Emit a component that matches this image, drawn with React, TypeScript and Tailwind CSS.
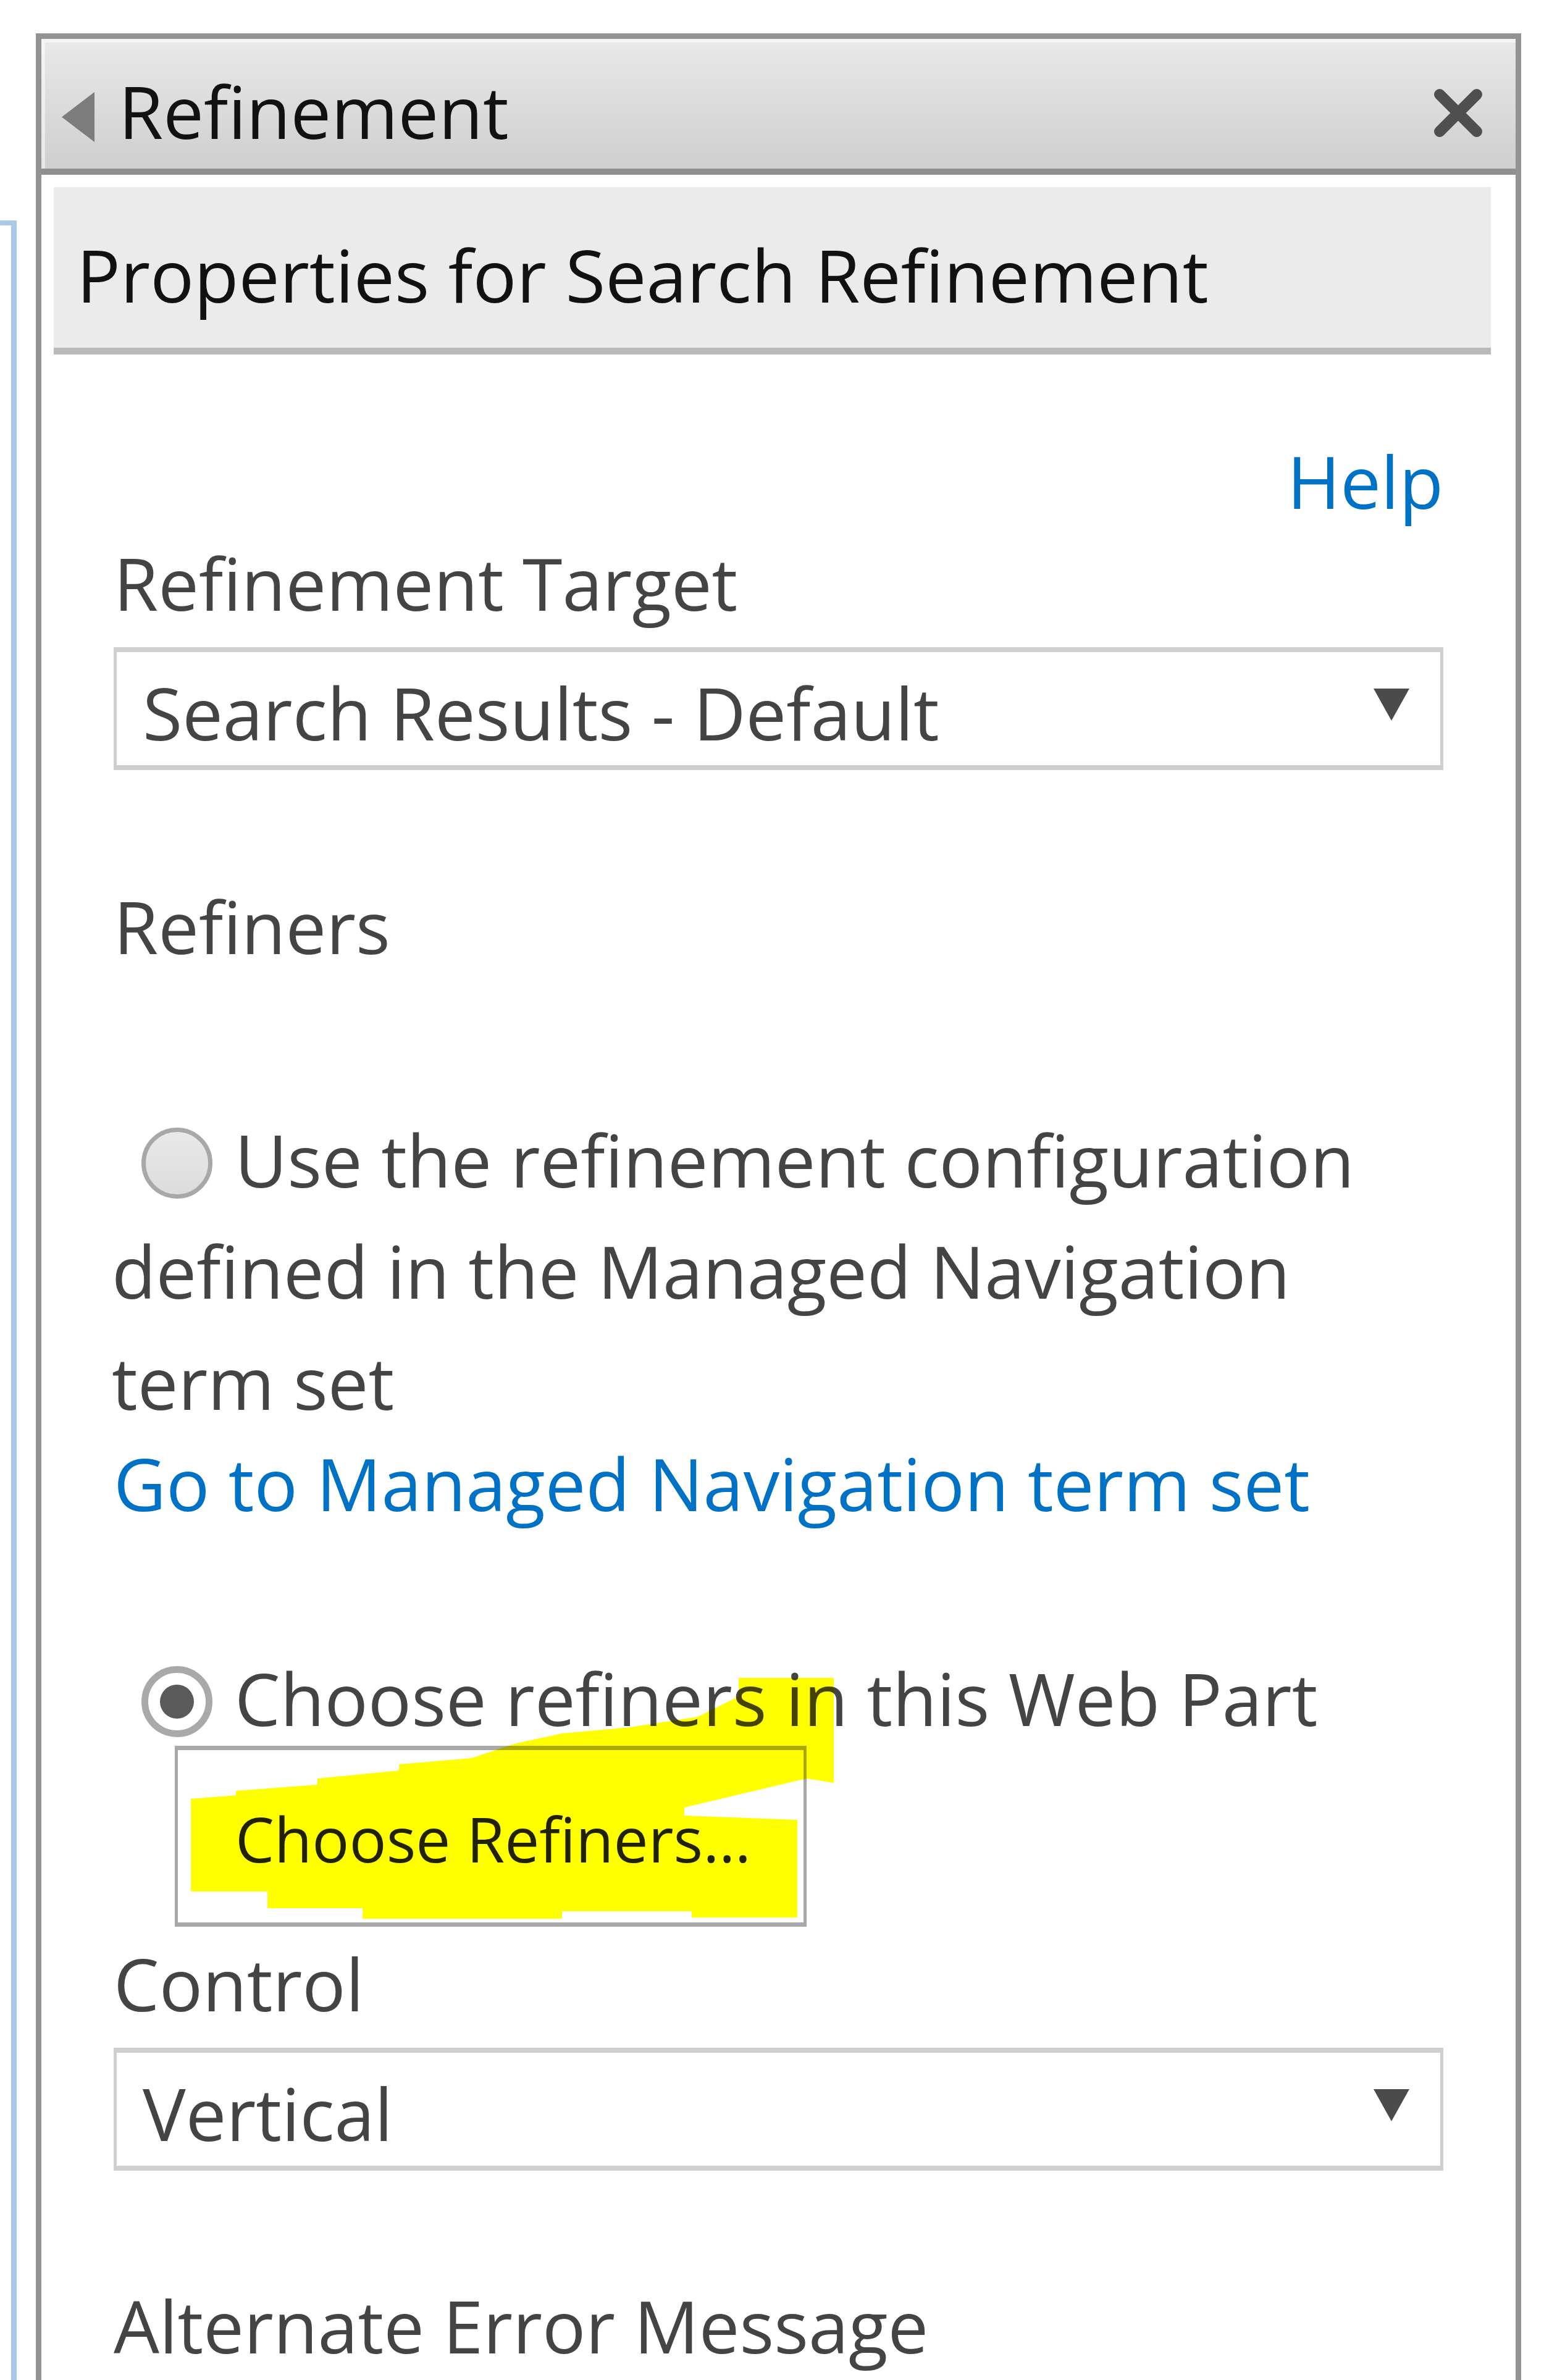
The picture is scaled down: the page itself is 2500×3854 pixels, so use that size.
import React from "react";

function Radio({ checked }: { checked?: boolean }) {
  if (checked) {
    return (
      <span className="inline-block align-[-18px] ml-[48px] mr-[36px] w-[115px] h-[115px] rounded-full border-[11px] border-[#a9a9a9] bg-white p-[19px]">
        <span className="block w-full h-full rounded-full bg-[#5a5a5a]" />
      </span>
    );
  }
  return (
    <span className="inline-block align-[-18px] ml-[48px] mr-[36px] w-[115px] h-[115px] rounded-full border-[7px] border-[#a8a8a8] bg-linear-to-b from-[#e9e9e9] to-[#dcdcdc]" />
  );
}

function Select({ value }: { value: string }) {
  return (
    <div className="flex h-[199px] border-y-[8px] border-x-[5px] border-[#cfcfcf] pl-[42px] pr-[50px] pt-[12px]">
      <span className="flex-1 self-center text-[117px] leading-[120px] text-[#444]">{value}</span>
      <svg width="58" height="52" viewBox="0 0 58 52" className="mt-[47px] shrink-0">
        <path d="M0 0H58L29 52Z" fill="#4b4b4b" />
      </svg>
    </div>
  );
}

export default function App() {
  return (
    <div className="relative flex w-[2500px] h-[3854px] overflow-hidden bg-white pt-[54px] font-['Open_Sans',sans-serif]">
      {/* page content edge on the left */}
      <div className="w-[58px] shrink-0">
        <div className="mt-[303px] w-[27px] h-[3600px] border-t-[8px] border-r-[9px] border-[#a9c9e9]" />
      </div>

      {/* tool pane */}
      <div className="w-[2405px] shrink-0 border-x-[9px] border-t-[9px] border-[#939393] bg-white">
        <div className="flex items-center h-[220px] pt-[24px] border-b-[10px] border-[#8f8f8f] bg-linear-to-b from-[#e9e9e9] to-[#cfcfcf] shadow-[inset_6px_6px_0_rgba(255,255,255,0.5)]">
          <svg width="53" height="81" viewBox="0 0 53 81" className="ml-[33px] mt-[18px] shrink-0">
            <path d="M53 0V81L0 40.5Z" fill="#7c7c7c" />
          </svg>
          <span className="ml-[39px] flex-1 text-[117px] leading-[120px] text-[#111]">Refinement</span>
          <svg width="80" height="80" viewBox="0 0 80 80" className="mr-[53px] mt-[6px] shrink-0">
            <path d="M10 10L70 70M70 10L10 70" stroke="#4f4f4f" strokeWidth="18" strokeLinecap="round" />
          </svg>
        </div>

        <div className="mt-[20px] ml-[20px] mr-[40px] flex items-center h-[271px] pt-[24px] pl-[37px] bg-[#ebebeb] border-b-[11px] border-[#b9b9b9]">
          <span className="text-[118px] leading-[120px] text-[#111]">Properties for Search Refinement</span>
        </div>

        <div className="px-[117px] text-[#444]">
          <div className="mt-[145px] text-right text-[117px] leading-[120px] text-[#0072c6]">Help</div>
          <div className="mt-[45px] text-[117px] leading-[120px]">Refinement Target</div>
          <div className="mt-[44px]">
            <Select value="Search Results - Default" />
          </div>

          <div className="mt-[193px] text-[117px] leading-[120px]">Refiners</div>

          <div className="mt-[228px] -ml-[3px] text-[117px] leading-[180px]">
            <Radio />
            Use the refinement configuration defined in the Managed Navigation term set
          </div>
          <div className="mt-[14px] text-[117px] leading-[120px] text-[#0072c6]">Go to Managed Navigation term set</div>

          <div className="mt-[211px] -ml-[3px] text-[117px] leading-[154px] whitespace-nowrap">
            <Radio checked />
            Choose refiners in this Web Part
          </div>
          <div className="ml-[99px] flex items-center w-[1023px] h-[293px] pt-[6px] pl-[93px] border-y-[7px] border-x-[5px] border-[#a9a9a9] bg-white">
            <span className="text-[100px] leading-[110px] text-[#222]">Choose Refiners…</span>
          </div>

          <div className="mt-[32px] text-[117px] leading-[120px]">Control</div>
          <div className="mt-[44px]">
            <Select value="Vertical" />
          </div>

          <div className="mt-[191px] text-[117px] leading-[120px]">Alternate Error Message</div>
        </div>
      </div>

      {/* highlighter stroke drawn over the button */}
      <svg
        width="1100"
        height="430"
        viewBox="280 2700 1100 430"
        className="absolute left-[280px] top-[2700px] mix-blend-multiply pointer-events-none"
      >
        <path
          d="M309 2913L382 2907L382 2900L514 2890L514 2880L646 2867L646 2857L763 2847L836 2823L910 2807L1020 2797L1130 2780L1196 2747L1196 2717L1350 2717L1350 2887L1306 2880L1108 2927L1108 2940L1291 2947L1291 3105L1120 3105L1120 3095L910 3095L910 3107L587 3107L587 3090L433 3090L433 3063L309 3063Z"
          fill="#ffff00"
        />
      </svg>
    </div>
  );
}
